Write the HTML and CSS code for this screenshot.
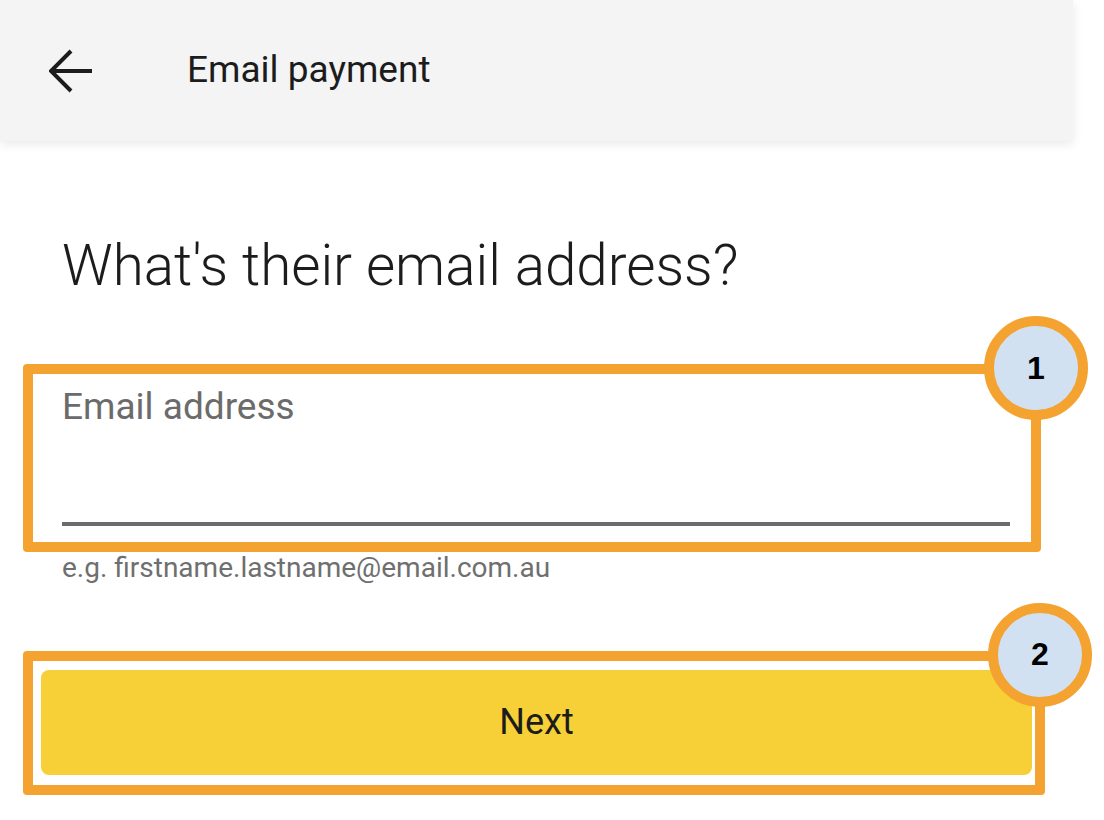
FILE: index.html
```html
<!DOCTYPE html>
<html lang="en">
<head>
    <meta charset="UTF-8">
    <meta name="viewport" content="width=device-width, initial-scale=1.0">
    <title>Email payment</title>
    <link rel="stylesheet" href="styles.css">
</head>
<body>
    <div class="screen">
        <header class="app-bar">
            <svg class="back-icon" width="44" height="44" viewBox="0 0 44 44">
                <path d="M43 22 H4 M22 2 L2 22 L22 42" fill="none" stroke="#1c1c1c" stroke-width="4"/>
            </svg>
            <span class="app-title">Email payment</span>
        </header>

        <main class="content">
            <h1 class="question">What's their email address?</h1>

            <div class="callout field-callout">
                <label class="field-label" for="email">Email address</label>
                <input class="field-input" id="email" type="email">
                <div class="badge">1</div>
            </div>
            <p class="hint">e.g. firstname.lastname@email.com.au</p>

            <div class="callout button-callout">
                <button class="next-btn">Next</button>
                <div class="badge">2</div>
            </div>
        </main>
    </div>
</body>
</html>
```

FILE: styles.css
```css
body, html {
    margin: 0;
    padding: 0;
    background-color: #fff;
    font-family: Roboto, "Liberation Sans", Arial, sans-serif;
    color: #1f1f1f;
}

.screen {
    width: 1104px;
    height: 820px;
    overflow: hidden;
}

.app-bar {
    width: 1073px;
    height: 141px;
    background-color: #f4f4f4;
    box-shadow: 0 3px 10px rgba(0, 0, 0, 0.09);
    display: flex;
    align-items: center;
    padding-left: 49px;
    box-sizing: border-box;
}

.back-icon {
    display: block;
    flex-shrink: 0;
}

.app-title {
    margin-left: 94px;
    font-size: 37px;
    line-height: 1.2;
    color: #1c1c1c;
}

.content {
    padding: 0 0 0 23px;
}

.question {
    margin: 95px 0 0 39px;
    font-size: 56.5px;
    font-weight: 300;
    line-height: 60px;
    color: #1c1c1c;
}

.callout {
    position: relative;
    border: 10px solid #f4a230;
    border-radius: 4px;
}

.field-callout {
    width: 948px;
    margin-top: 68px;
    padding: 12px 21px 16px 29px;
}

.field-label {
    display: block;
    font-size: 37px;
    line-height: 42px;
    color: #6b6b6b;
}

.field-input {
    display: block;
    width: 100%;
    height: 94px;
    margin: 0;
    padding: 0;
    border: none;
    border-bottom: 4px solid #6b6b6b;
    background: transparent;
    outline: none;
    font: inherit;
}

.hint {
    margin: -1px 0 0 39px;
    font-size: 28px;
    line-height: 1.2;
    color: #6f6f6f;
}

.button-callout {
    width: 991px;
    margin-top: 66px;
    padding: 9px 3px 10px 8px;
}

.next-btn {
    display: block;
    width: 100%;
    height: 105px;
    border: none;
    border-radius: 8px;
    background-color: #f7d038;
    font-family: inherit;
    font-size: 36px;
    color: #1c1c1c;
}

.badge {
    position: absolute;
    top: -58px;
    right: -57px;
    width: 84px;
    height: 84px;
    border: 10px solid #f4a230;
    border-radius: 50%;
    background-color: #d2e1f1;
    display: flex;
    justify-content: center;
    align-items: center;
    font-family: "Liberation Sans", Arial, sans-serif;
    font-weight: bold;
    font-size: 32px;
    color: #000;
}
```
